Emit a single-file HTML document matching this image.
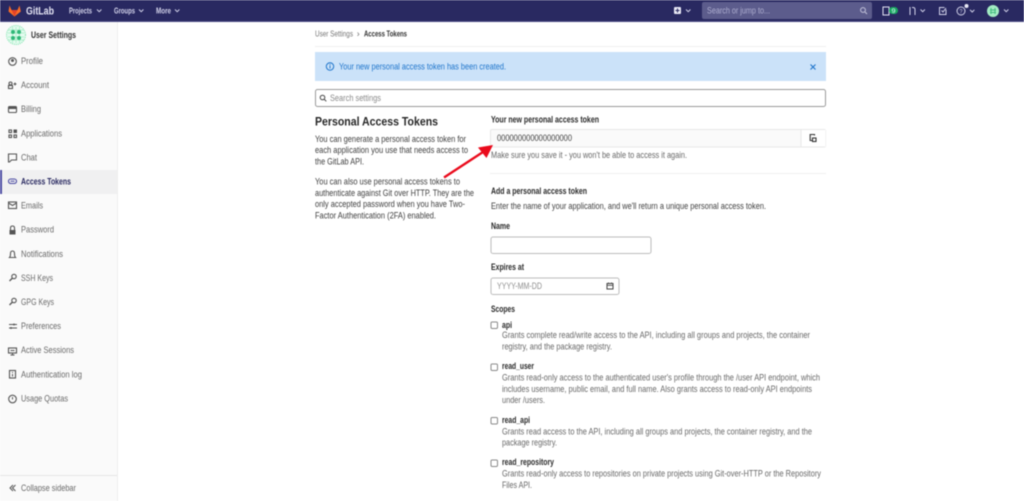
<!DOCTYPE html>
<html><head><meta charset="utf-8"><title>Access Tokens</title>
<style>
html,body{margin:0;padding:0;background:#fff;width:1024px;height:501px;overflow:hidden}
svg{display:block;filter:blur(.42px)}
text{font-family:"Liberation Sans",sans-serif;font-size:9px;white-space:pre}
.n{fill:#d3d3ea;font-weight:bold;font-size:8.5px}
.s{fill:#6a6a6a}
.b{fill:#2a2a2a;font-weight:bold}
.t{fill:#404040}
.h{fill:#686868}
.ic{fill:none;stroke:#555;stroke-width:1.1}
.ch{fill:none;stroke:#d3d3ea;stroke-width:1}
.nv{fill:none;stroke:#d3d3ea;stroke-width:1}
</style></head><body>
<svg width="1024" height="501" viewBox="0 0 1024 501" xmlns="http://www.w3.org/2000/svg">
<rect width="1024" height="501" fill="#fff"/>
<!-- sidebar -->
<rect x="0" y="22" width="117" height="479" fill="#fafafa"/>
<rect x="117" y="22" width="1" height="479" fill="#eeeeee"/>
<rect x="0" y="170" width="117" height="24" fill="#f0f0f1"/>
<rect x="0" y="170" width="2" height="24" fill="#4b4ba3"/>
<rect x="0" y="475" width="117" height="1" fill="#e6e6e6"/>
<!-- topbar -->
<rect width="1024" height="21" fill="#292961"/>
<rect y="21" width="1024" height="1" fill="#4b4b85"/>
<path d="M14.500 16.500L8.500 11.500L9.500 5.500L11.500 10H17.500L19.500 5.500L20.800 11.500Z" fill="#fc6d26"/>
<path d="M14.500 16.500L11.500 10H17.500Z" fill="#e24329"/>
<text x="26" y="14.500" textLength="28" lengthAdjust="spacingAndGlyphs" style="font-size:11px;fill:#e2e2f2;font-weight:bold">GitLab</text>
<text x="69" y="13.500" textLength="23" lengthAdjust="spacingAndGlyphs" class="n">Projects</text>
<path class="ch" d="M97 9.500l2.200 2.200 2.200-2.200"/>
<text x="114" y="13.500" textLength="21" lengthAdjust="spacingAndGlyphs" class="n">Groups</text>
<path class="ch" d="M139 9.500l2.200 2.200 2.200-2.200"/>
<text x="156" y="13.500" textLength="15" lengthAdjust="spacingAndGlyphs" class="n">More</text>
<path class="ch" d="M175 9.500l2.200 2.200 2.200-2.200"/>
<!-- right nav -->
<rect x="674" y="7" width="7" height="7" rx="1" fill="#e8e8f4"/>
<path d="M677.500 8.500v4M675.500 10.500h4" stroke="#292961" stroke-width="1"/>
<path class="ch" d="M686 9.500l2.200 2.200 2.200-2.200"/>
<rect x="702" y="2" width="170" height="17" rx="2" fill="#5c5c8c"/>
<text x="707" y="13.500" textLength="63" lengthAdjust="spacingAndGlyphs" style="fill:#aeaed0">Search or jump to...</text>
<circle cx="863" cy="10" r="2.400" fill="none" stroke="#c4c4dc" stroke-width="1"/>
<path d="M865 12l2 2" stroke="#c4c4dc" stroke-width="1"/>
<rect x="883" y="7" width="6" height="8" fill="none" stroke="#e2e2f2" stroke-width="1"/>
<rect x="889" y="7" width="9" height="7" rx="3.500" fill="#1aa760"/>
<text x="891.500" y="13" style="font-size:6px;fill:#dff" textLength="4" lengthAdjust="spacingAndGlyphs">9</text>
<path class="nv" d="M910 7v8M915 15V9.500Q915 7.500 913 7.500H912"/>
<path class="ch" d="M920.500 9.500l2.200 2.200 2.200-2.200"/>
<path class="nv" d="M946 9.500V14.500H939.500V7.500H944.500M941.500 10.500l1.500 1.500 3-4"/>
<circle cx="961" cy="11" r="4" class="nv"/>
<text x="959.500" y="13.500" style="font-size:6.500px;fill:#d3d3ea" textLength="3" lengthAdjust="spacingAndGlyphs">?</text>
<circle cx="966.500" cy="6" r="2" fill="#e8e8f4"/>
<path class="ch" d="M970 9.800l2.200 2.200 2.200-2.200"/>
<circle cx="993" cy="11" r="6" fill="#a4ecc4"/>
<path d="M991 8v6M995 8v6M990 10h6M990 12.500h6" stroke="#44bb80" stroke-width="1"/>
<path class="ch" d="M1004 9.500l2.200 2.200 2.200-2.200"/>
<!-- sidebar header -->
<circle cx="16" cy="35" r="9.500" fill="#e4fbef" stroke="#7fe3ae" stroke-width="1" stroke-dasharray="1 1"/>
<path d="M12.500 27v16M19.500 27v16M8 33h16M8 37h16M16 27v16M8 30h16M8 40h16" stroke="#a4ecc4" stroke-width=".7"/>
<circle cx="13" cy="32" r="2" fill="#2fb878"/><circle cx="19" cy="32" r="2" fill="#2fb878"/>
<circle cx="13" cy="38" r="2" fill="#2fb878"/><circle cx="19" cy="38" r="2" fill="#2fb878"/>
<text x="31" y="38" textLength="45" lengthAdjust="spacingAndGlyphs" style="fill:#333;font-weight:bold">User Settings</text>
<!-- sidebar items -->
<text class="s" x="21" y="64" textLength="22" lengthAdjust="spacingAndGlyphs">Profile</text>
<text class="s" x="21" y="88" textLength="28" lengthAdjust="spacingAndGlyphs">Account</text>
<text class="s" x="21" y="112" textLength="20" lengthAdjust="spacingAndGlyphs">Billing</text>
<text class="s" x="21" y="136.500" textLength="41" lengthAdjust="spacingAndGlyphs">Applications</text>
<text class="s" x="21" y="160.500" textLength="16" lengthAdjust="spacingAndGlyphs">Chat</text>
<text x="21" y="184.500" textLength="50" lengthAdjust="spacingAndGlyphs" style="fill:#292961;font-weight:bold">Access Tokens</text>
<text class="s" x="21" y="208.500" textLength="22" lengthAdjust="spacingAndGlyphs">Emails</text>
<text class="s" x="21" y="232.500" textLength="33" lengthAdjust="spacingAndGlyphs">Password</text>
<text class="s" x="21" y="257" textLength="42" lengthAdjust="spacingAndGlyphs">Notifications</text>
<text class="s" x="21" y="281" textLength="32" lengthAdjust="spacingAndGlyphs">SSH Keys</text>
<text class="s" x="21" y="305" textLength="33" lengthAdjust="spacingAndGlyphs">GPG Keys</text>
<text class="s" x="21" y="329" textLength="40" lengthAdjust="spacingAndGlyphs">Preferences</text>
<text class="s" x="21" y="353" textLength="53" lengthAdjust="spacingAndGlyphs">Active Sessions</text>
<text class="s" x="21" y="377.500" textLength="61" lengthAdjust="spacingAndGlyphs">Authentication log</text>
<text class="s" x="21" y="401.500" textLength="47" lengthAdjust="spacingAndGlyphs">Usage Quotas</text>
<text class="s" x="21" y="491" textLength="55" lengthAdjust="spacingAndGlyphs">Collapse sidebar</text>
<!-- sidebar icons -->
<circle class="ic" cx="12.500" cy="61.500" r="3.800"/><circle cx="12.500" cy="60.500" r="1.500" fill="#555"/>
<circle cx="10.500" cy="83.500" r="1.500" class="ic"/><rect x="8.500" y="85.500" width="4" height="3" class="ic"/><path d="M15 82.500v3M13.500 84h3" stroke="#555" stroke-width="1"/>
<rect class="ic" x="8.500" y="106.500" width="8" height="6" rx="1"/><rect x="8.500" y="107" width="8" height="2" fill="#555"/>
<rect class="ic" x="9" y="130" width="2.500" height="2.500"/><rect x="13.500" y="129.500" width="3.500" height="3.500" fill="#555"/><rect class="ic" x="9" y="135" width="2.500" height="2.500"/><rect class="ic" x="14" y="135" width="2.500" height="2.500"/>
<path class="ic" d="M8.500 154h8v6h-5l-2 2h-1z"/>
<rect x="8.500" y="179" width="8" height="4.500" rx="2.200" fill="none" stroke="#4b4ba3" stroke-width="1.100"/><path d="M10.500 181.200h4" stroke="#4b4ba3" stroke-width="1"/>
<rect class="ic" x="8.500" y="202" width="8" height="6.500"/><path class="ic" d="M8.500 203l4 2.500 4-2.500"/>
<rect x="9.500" y="230" width="6" height="4.500" fill="#555"/><path class="ic" d="M10.500 230v-2q0-2 2-2t2 2v2"/>
<path class="ic" d="M9.500 257.500q1-1 1-4 0-2.500 2-2.500t2 2.500q0 3 1 4z"/>
<circle class="ic" cx="14" cy="276.500" r="2.200"/><path d="M12.500 278l-3 3" stroke="#555" stroke-width="1.300"/>
<circle class="ic" cx="14" cy="300.500" r="2.200"/><path d="M12.500 302l-3 3" stroke="#555" stroke-width="1.300"/>
<path class="ic" d="M9 324.500h8M9 328h8"/><circle cx="14" cy="324.500" r="1" fill="#555"/><circle cx="11" cy="328" r="1" fill="#555"/>
<rect class="ic" x="8.500" y="348" width="8" height="5"/><path d="M10.500 350.500h4M12.500 353v2M10.500 355h4" stroke="#555" stroke-width="1"/>
<rect class="ic" x="9.500" y="370.500" width="6" height="7.500"/><path d="M12.500 372v1M12.500 374v2.500" stroke="#555" stroke-width="1"/>
<circle class="ic" cx="12.500" cy="399" r="3.800"/><path d="M12.500 397v2.500" stroke="#555" stroke-width="1"/>
<path d="M13 485l-3 3 3 3M15.500 485l-3 3 3 3" fill="none" stroke="#555" stroke-width="1"/>
<!-- breadcrumb -->
<text x="315" y="36.500" textLength="38" lengthAdjust="spacingAndGlyphs" style="fill:#777;font-size:8px">User Settings</text>
<path d="M357.500 32.500l1.500 1.700-1.500 1.700" fill="none" stroke="#777" stroke-width=".7"/>
<text x="364" y="36.500" textLength="43" lengthAdjust="spacingAndGlyphs" style="fill:#333;font-size:8px;font-weight:bold">Access Tokens</text>
<rect x="315" y="46" width="511" height="1" fill="#f0f0f0"/>
<!-- alert -->
<rect x="315" y="52" width="511" height="29" fill="#cbe2f9"/>
<circle cx="330" cy="66.500" r="3.700" fill="none" stroke="#1f75cb" stroke-width="1"/>
<path d="M330 65.500v3M330 64v1" stroke="#1f75cb" stroke-width=".9"/>
<text x="339" y="69.500" textLength="167" lengthAdjust="spacingAndGlyphs" style="fill:#1f75cb">Your new personal access token has been created.</text>
<path d="M810.500 64.500l5 5M815.500 64.500l-5 5" stroke="#1f75cb" stroke-width="1.100"/>
<!-- search -->
<rect x="315.500" y="89.500" width="510" height="17" rx="2" fill="#fff" stroke="#9a9a9a"/>
<circle cx="322.500" cy="97.500" r="2.300" fill="none" stroke="#444" stroke-width="1"/><path d="M324.300 99.300l2 2" stroke="#444" stroke-width="1"/>
<text x="330" y="101" textLength="51" lengthAdjust="spacingAndGlyphs" style="fill:#8a8a8a">Search settings</text>
<!-- left column -->
<text x="315" y="125.500" textLength="123" lengthAdjust="spacingAndGlyphs" style="fill:#262626;font-weight:bold;font-size:11.500px">Personal Access Tokens</text>
<text class="t" x="315" y="142" textLength="151" lengthAdjust="spacingAndGlyphs">You can generate a personal access token for</text>
<text class="t" x="315" y="153" textLength="153" lengthAdjust="spacingAndGlyphs">each application you use that needs access to</text>
<text class="t" x="315" y="164.500" textLength="49" lengthAdjust="spacingAndGlyphs">the GitLab API.</text>
<text class="t" x="315" y="184.500" textLength="145" lengthAdjust="spacingAndGlyphs">You can also use personal access tokens to</text>
<text class="t" x="315" y="196" textLength="159" lengthAdjust="spacingAndGlyphs">authenticate against Git over HTTP. They are the</text>
<text class="t" x="315" y="207" textLength="150" lengthAdjust="spacingAndGlyphs">only accepted password when you have Two-</text>
<text class="t" x="315" y="218.500" textLength="121" lengthAdjust="spacingAndGlyphs">Factor Authentication (2FA) enabled.</text>
<!-- token -->
<text class="b" x="491" y="122.500" textLength="108" lengthAdjust="spacingAndGlyphs">Your new personal access token</text>
<rect x="490.500" y="129.500" width="335" height="17.500" rx="1.500" fill="#fafafa" stroke="#e8e8e8"/>
<rect x="801" y="130" width="24.500" height="16.500" fill="#fff"/>
<rect x="800.500" y="129.500" width="1" height="17.500" fill="#e8e8e8"/>
<text x="497" y="141" textLength="75" lengthAdjust="spacingAndGlyphs" style="fill:#404040">000000000000000000</text>
<path d="M811 135v-.5h3.500v1M811 134.500h-.8v6h2.300" fill="none" stroke="#333" stroke-width="1.100"/>
<rect x="812.500" y="138" width="3.500" height="3.500" fill="none" stroke="#333" stroke-width="1.100"/>
<text class="h" x="491" y="158" textLength="196" lengthAdjust="spacingAndGlyphs">Make sure you save it - you won't be able to access it again.</text>
<rect x="490" y="173" width="336" height="1" fill="#f0f0f0"/>
<text class="b" x="491" y="194" textLength="96" lengthAdjust="spacingAndGlyphs">Add a personal access token</text>
<text class="t" x="491" y="209" textLength="275" lengthAdjust="spacingAndGlyphs">Enter the name of your application, and we'll return a unique personal access token.</text>
<text class="b" x="491" y="229" textLength="19" lengthAdjust="spacingAndGlyphs">Name</text>
<rect x="491" y="237" width="160" height="16.500" rx="2" fill="#fff" stroke="#bdbdbd"/>
<text class="b" x="491" y="270" textLength="33" lengthAdjust="spacingAndGlyphs">Expires at</text>
<rect x="491" y="278" width="128" height="16.500" rx="2" fill="#fff" stroke="#bdbdbd"/>
<text x="497" y="289" textLength="45" lengthAdjust="spacingAndGlyphs" style="fill:#8f8f8f">YYYY-MM-DD</text>
<rect x="607" y="283.500" width="6" height="5.500" fill="none" stroke="#444" stroke-width="1"/>
<path d="M607 285.300h6M608.500 282.500v1.500M611.500 282.500v1.500" stroke="#444" stroke-width=".9"/>
<text class="b" x="491" y="312" textLength="24" lengthAdjust="spacingAndGlyphs">Scopes</text>
<!-- scopes -->
<rect x="491" y="322" width="6.500" height="6.500" rx="1.200" fill="#fff" stroke="#8a8a8a"/>
<text class="b" x="502" y="328" textLength="10" lengthAdjust="spacingAndGlyphs">api</text>
<text class="h" x="502" y="338" textLength="308" lengthAdjust="spacingAndGlyphs">Grants complete read/write access to the API, including all groups and projects, the container</text>
<text class="h" x="502" y="349.500" textLength="110" lengthAdjust="spacingAndGlyphs">registry, and the package registry.</text>
<rect x="491" y="364" width="6.500" height="6.500" rx="1.200" fill="#fff" stroke="#8a8a8a"/>
<text class="b" x="502" y="369" textLength="32" lengthAdjust="spacingAndGlyphs">read_user</text>
<text class="h" x="502" y="380.500" textLength="318" lengthAdjust="spacingAndGlyphs">Grants read-only access to the authenticated user's profile through the /user API endpoint, which</text>
<text class="h" x="502" y="392" textLength="310" lengthAdjust="spacingAndGlyphs">includes username, public email, and full name. Also grants access to read-only API endpoints</text>
<text class="h" x="502" y="403" textLength="43" lengthAdjust="spacingAndGlyphs">under /users.</text>
<rect x="491" y="417.500" width="6.500" height="6.500" rx="1.200" fill="#fff" stroke="#8a8a8a"/>
<text class="b" x="502" y="423" textLength="28" lengthAdjust="spacingAndGlyphs">read_api</text>
<text class="h" x="502" y="434.500" textLength="310" lengthAdjust="spacingAndGlyphs">Grants read access to the API, including all groups and projects, the container registry, and the</text>
<text class="h" x="502" y="445.500" textLength="55" lengthAdjust="spacingAndGlyphs">package registry.</text>
<rect x="491" y="460" width="6.500" height="6.500" rx="1.200" fill="#fff" stroke="#8a8a8a"/>
<text class="b" x="502" y="465" textLength="52" lengthAdjust="spacingAndGlyphs">read_repository</text>
<text class="h" x="502" y="476.500" textLength="319" lengthAdjust="spacingAndGlyphs">Grants read-only access to repositories on private projects using Git-over-HTTP or the Repository</text>
<text class="h" x="502" y="488" textLength="30" lengthAdjust="spacingAndGlyphs">Files API.</text>
<!-- arrow -->
<path d="M444 177.500L483 152" stroke="#ea0b1c" stroke-width="2.300" fill="none"/>
<path d="M493 145L478 147.500L486.500 158Z" fill="#ea0b1c"/>
</svg>
</body></html>
